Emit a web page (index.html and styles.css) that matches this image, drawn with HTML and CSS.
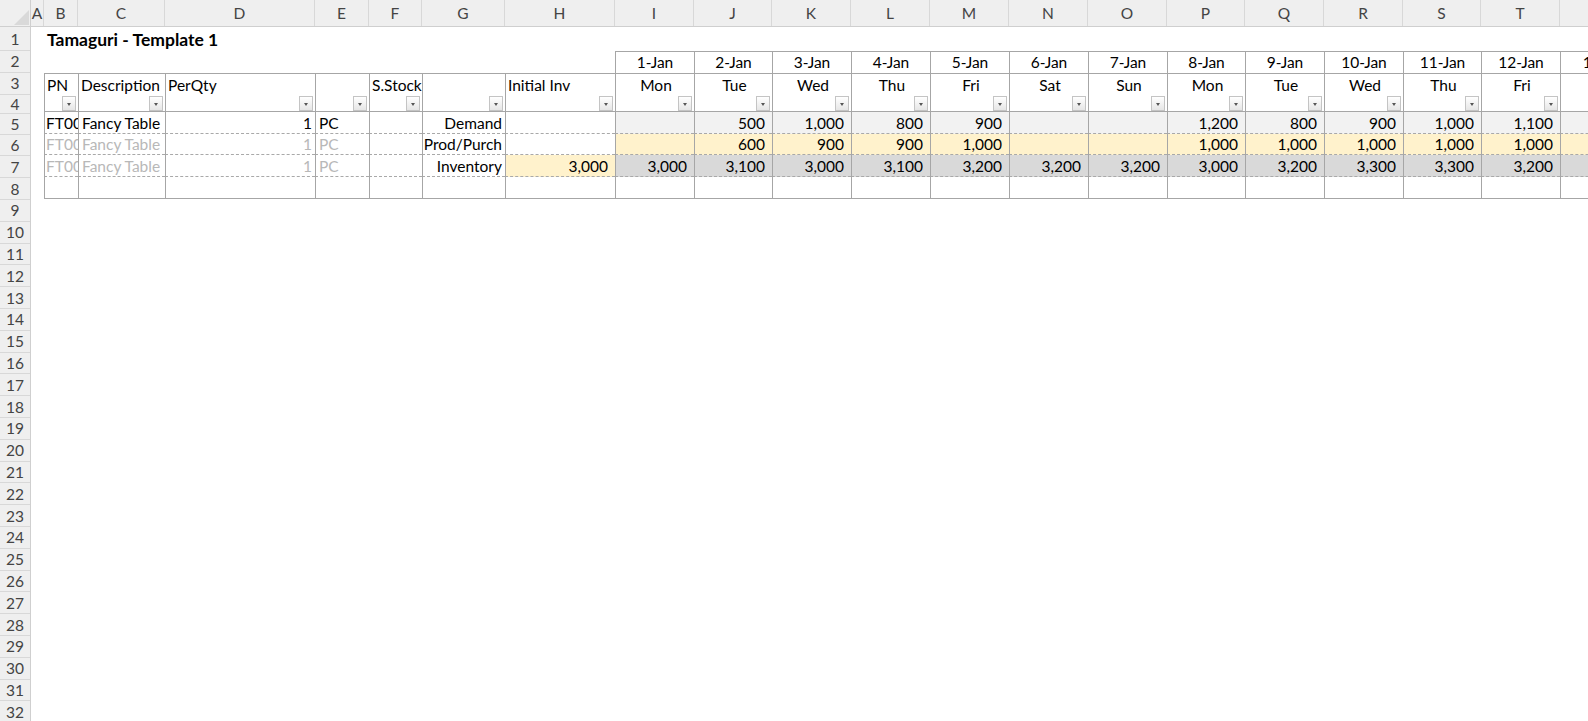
FILE: index.html
```html
<!DOCTYPE html>
<html lang="en">
<head>
    <meta charset="UTF-8">
    <meta name="viewport" content="width=device-width, initial-scale=1.0">
    <title>Tamaguri - Template 1</title>
    <link rel="stylesheet" href="styles.css">
</head>
<body>
    <div class="sheet">
        <div class="corner">
            <svg width="31" height="27" viewBox="0 0 31 27"><polygon points="29,10 29,25 14,25" fill="#d9d9d9"/></svg>
        </div>

        <!-- column letters -->
        <div class="colbar">
            <div class="col">A</div>
            <div class="col">B</div>
            <div class="col">C</div>
            <div class="col">D</div>
            <div class="col">E</div>
            <div class="col">F</div>
            <div class="col">G</div>
            <div class="col">H</div>
            <div class="col">I</div>
            <div class="col">J</div>
            <div class="col">K</div>
            <div class="col">L</div>
            <div class="col">M</div>
            <div class="col">N</div>
            <div class="col">O</div>
            <div class="col">P</div>
            <div class="col">Q</div>
            <div class="col">R</div>
            <div class="col">S</div>
            <div class="col">T</div>
            <div class="col">U</div>
        </div>

        <!-- row numbers -->
        <div class="rowbar">
            <div class="rn rn-title">1</div>
            <div class="rn">2</div>
            <div class="rn">3</div>
            <div class="rn rn-short">4</div>
            <div class="rn">5</div>
            <div class="rn rn-thin">6</div>
            <div class="rn">7</div>
            <div class="rn">8</div>
            <div class="rn">9</div>
            <div class="rn">10</div>
            <div class="rn">11</div>
            <div class="rn">12</div>
            <div class="rn">13</div>
            <div class="rn">14</div>
            <div class="rn">15</div>
            <div class="rn">16</div>
            <div class="rn">17</div>
            <div class="rn">18</div>
            <div class="rn">19</div>
            <div class="rn">20</div>
            <div class="rn">21</div>
            <div class="rn">22</div>
            <div class="rn">23</div>
            <div class="rn">24</div>
            <div class="rn">25</div>
            <div class="rn">26</div>
            <div class="rn">27</div>
            <div class="rn">28</div>
            <div class="rn">29</div>
            <div class="rn">30</div>
            <div class="rn">31</div>
            <div class="rn">32</div>
        </div>

        <div class="canvas">
            <div class="title">Tamaguri - Template 1</div>

            <div class="plan">
                <!-- row 2: dates -->
                <div class="lead"></div>
                <div class="dt">1-Jan</div>
                <div class="dt">2-Jan</div>
                <div class="dt">3-Jan</div>
                <div class="dt">4-Jan</div>
                <div class="dt">5-Jan</div>
                <div class="dt">6-Jan</div>
                <div class="dt">7-Jan</div>
                <div class="dt">8-Jan</div>
                <div class="dt">9-Jan</div>
                <div class="dt">10-Jan</div>
                <div class="dt">11-Jan</div>
                <div class="dt">12-Jan</div>
                <div class="dt">13-Jan</div>

                <!-- rows 3-4: table header with filters -->
                <div class="hd"><span class="lbl">PN</span><span class="flt"></span></div>
                <div class="hd"><span class="lbl">Description</span><span class="flt"></span></div>
                <div class="hd"><span class="lbl">PerQty</span><span class="flt"></span></div>
                <div class="hd"><span class="lbl"></span><span class="flt"></span></div>
                <div class="hd"><span class="lbl">S.Stock</span><span class="flt"></span></div>
                <div class="hd"><span class="lbl"></span><span class="flt"></span></div>
                <div class="hd"><span class="lbl">Initial Inv</span><span class="flt"></span></div>
                <div class="hd day"><span class="lbl">Mon</span><span class="flt"></span></div>
                <div class="hd day"><span class="lbl">Tue</span><span class="flt"></span></div>
                <div class="hd day"><span class="lbl">Wed</span><span class="flt"></span></div>
                <div class="hd day"><span class="lbl">Thu</span><span class="flt"></span></div>
                <div class="hd day"><span class="lbl">Fri</span><span class="flt"></span></div>
                <div class="hd day"><span class="lbl">Sat</span><span class="flt"></span></div>
                <div class="hd day"><span class="lbl">Sun</span><span class="flt"></span></div>
                <div class="hd day"><span class="lbl">Mon</span><span class="flt"></span></div>
                <div class="hd day"><span class="lbl">Tue</span><span class="flt"></span></div>
                <div class="hd day"><span class="lbl">Wed</span><span class="flt"></span></div>
                <div class="hd day"><span class="lbl">Thu</span><span class="flt"></span></div>
                <div class="hd day"><span class="lbl">Fri</span><span class="flt"></span></div>
                <div class="hd day"><span class="lbl">Sat</span><span class="flt"></span></div>

                <!-- row 5: demand -->
                <div class="c pn">FT00</div>
                <div class="c">Fancy Table</div>
                <div class="c r">1</div>
                <div class="c">PC</div>
                <div class="c"></div>
                <div class="c r">Demand</div>
                <div class="c n"></div>
                <div class="c n f-lt"></div>
                <div class="c n f-lt">500</div>
                <div class="c n f-lt">1,000</div>
                <div class="c n f-lt">800</div>
                <div class="c n f-lt">900</div>
                <div class="c n f-lt"></div>
                <div class="c n f-lt"></div>
                <div class="c n f-lt">1,200</div>
                <div class="c n f-lt">800</div>
                <div class="c n f-lt">900</div>
                <div class="c n f-lt">1,000</div>
                <div class="c n f-lt">1,100</div>
                <div class="c n f-lt"></div>

                <!-- row 6: production / purchase -->
                <div class="c pn dim">FT00</div>
                <div class="c dim">Fancy Table</div>
                <div class="c r dim">1</div>
                <div class="c dim">PC</div>
                <div class="c"></div>
                <div class="c r">Prod/Purch</div>
                <div class="c n"></div>
                <div class="c n f-yl"></div>
                <div class="c n f-yl">600</div>
                <div class="c n f-yl">900</div>
                <div class="c n f-yl">900</div>
                <div class="c n f-yl">1,000</div>
                <div class="c n f-yl"></div>
                <div class="c n f-yl"></div>
                <div class="c n f-yl">1,000</div>
                <div class="c n f-yl">1,000</div>
                <div class="c n f-yl">1,000</div>
                <div class="c n f-yl">1,000</div>
                <div class="c n f-yl">1,000</div>
                <div class="c n f-yl"></div>

                <!-- row 7: inventory -->
                <div class="c pn dim">FT00</div>
                <div class="c dim">Fancy Table</div>
                <div class="c r dim">1</div>
                <div class="c dim">PC</div>
                <div class="c"></div>
                <div class="c r">Inventory</div>
                <div class="c n f-yl">3,000</div>
                <div class="c n f-dk">3,000</div>
                <div class="c n f-dk">3,100</div>
                <div class="c n f-dk">3,000</div>
                <div class="c n f-dk">3,100</div>
                <div class="c n f-dk">3,200</div>
                <div class="c n f-dk">3,200</div>
                <div class="c n f-dk">3,200</div>
                <div class="c n f-dk">3,000</div>
                <div class="c n f-dk">3,200</div>
                <div class="c n f-dk">3,300</div>
                <div class="c n f-dk">3,300</div>
                <div class="c n f-dk">3,200</div>
                <div class="c n f-dk"></div>

                <!-- row 8: empty table row -->
                <div class="c end"></div>
                <div class="c end"></div>
                <div class="c end"></div>
                <div class="c end"></div>
                <div class="c end"></div>
                <div class="c end"></div>
                <div class="c end"></div>
                <div class="c end"></div>
                <div class="c end"></div>
                <div class="c end"></div>
                <div class="c end"></div>
                <div class="c end"></div>
                <div class="c end"></div>
                <div class="c end"></div>
                <div class="c end"></div>
                <div class="c end"></div>
                <div class="c end"></div>
                <div class="c end"></div>
                <div class="c end"></div>
                <div class="c end"></div>
            </div>
        </div>
    </div>
</body>
</html>
```

FILE: styles.css
```css
:root {
    --head-bg: #efefef;
    --head-line: #d8d8d8;
    --head-text: #444;
    --cell-line: #a6a6a6;
    --fill-light: #f2f2f2;
    --fill-yellow: #fff2cc;
    --fill-dark: #d9d9d9;
    --dim-text: #b8b8b8;
    --cols: 34px 87px 150px 54px 53px 83px 110px 79px 78px 79px 79px 79px 79px 79px 78px 79px 79px 78px 79px 90px;
}
* {
    box-sizing: border-box;
}
body {
    margin: 0;
    font-family: Lato, 'Noto Sans', sans-serif;
    font-size: 15.5px;
    color: #000;
    background-color: white;
    overflow: hidden;
}
.sheet {
    display: grid;
    grid-template-columns: 31px 1fr;
    grid-template-rows: 27px 1fr;
    width: 100vw;
    height: 100vh;
    overflow: hidden;
}
.corner {
    background-color: var(--head-bg);
    border-right: 1px solid #cfcfcf;
    border-bottom: 1px solid #cfcfcf;
}
.corner svg {
    display: block;
}

/* column letters */
.colbar {
    display: grid;
    grid-template-columns: 13px var(--cols);
    background-color: var(--head-bg);
    border-bottom: 1px solid #cfcfcf;
    overflow: hidden;
}
.col {
    border-right: 1px solid var(--head-line);
    color: var(--head-text);
    font-size: 15.5px;
    text-align: center;
    line-height: 26px;
}

/* row numbers */
.rowbar {
    display: flex;
    flex-direction: column;
    background-color: var(--head-bg);
    border-right: 1px solid #cfcfcf;
    overflow: hidden;
}
.rn {
    flex: 0 0 21.8px;
    display: flex;
    align-items: center;
    justify-content: center;
    border-bottom: 1px solid var(--head-line);
    color: var(--head-text);
    font-size: 15.5px;
}
.rn-title {
    flex-basis: 24px;
}
.rn-short {
    flex-basis: 17px;
}
.rn-thin {
    flex-basis: 21px;
}

/* sheet area */
.canvas {
    padding-left: 13px;
    overflow: hidden;
}
.title {
    height: 24px;
    padding-left: 3px;
    font-size: 17.5px;
    font-weight: bold;
    line-height: 25px;
    white-space: nowrap;
}
.plan {
    display: grid;
    grid-template-columns: var(--cols);
    grid-template-rows: 22px 39px 22px 21px 22px 22px;
    white-space: nowrap;
}
.lead {
    grid-column: span 7;
}
.dt {
    border-top: 1px solid var(--cell-line);
    border-left: 1px solid var(--cell-line);
    text-align: center;
    line-height: 21px;
}

/* header cells */
.hd {
    display: flex;
    flex-direction: column;
    justify-content: space-between;
    border-top: 1px solid var(--cell-line);
    border-left: 1px solid var(--cell-line);
    border-bottom: 1px solid var(--cell-line);
    padding-left: 2px;
}
.hd .lbl {
    line-height: 22px;
    height: 22px;
}
.hd.day .lbl {
    text-align: center;
}
.flt {
    position: relative;
    align-self: flex-end;
    width: 14px;
    height: 15px;
    margin-right: 2px;
    border: 1px solid #c4c4c4;
    background: linear-gradient(#ffffff, #e6e6e6);
}
.flt::after {
    content: "";
    position: absolute;
    left: 4px;
    top: 6px;
    border-left: 2.5px solid transparent;
    border-right: 2.5px solid transparent;
    border-top: 3px solid #555;
}

/* body cells */
.c {
    display: flex;
    align-items: center;
    border-left: 1px solid var(--cell-line);
    border-bottom: 1px dashed #a9a9a9;
    padding: 0 3px;
    overflow: hidden;
}
.c.pn {
    padding-left: 1px;
}
.c.r {
    justify-content: flex-end;
    padding-right: 3px;
}
.c.n {
    justify-content: flex-end;
    padding-right: 7px;
}
.c.dim {
    color: var(--dim-text);
}
.c.end {
    border-bottom: 1px solid var(--cell-line);
}
.f-lt {
    background-color: var(--fill-light);
}
.f-yl {
    background-color: var(--fill-yellow);
}
.f-dk {
    background-color: var(--fill-dark);
}
```
